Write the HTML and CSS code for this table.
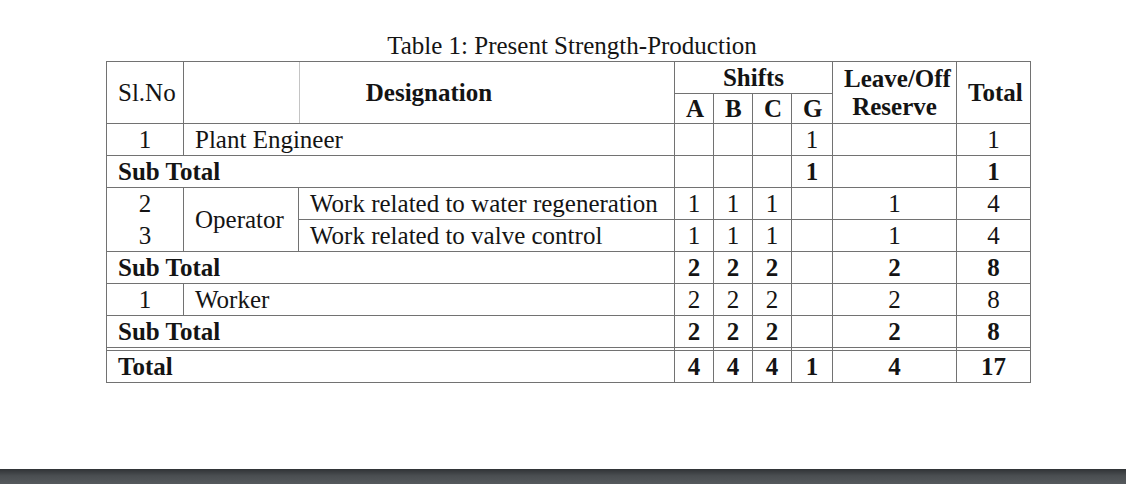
FILE: index.html
```html
<!DOCTYPE html>
<html>
<head>
<meta charset="utf-8">
<link rel="stylesheet" href="styles.css">
</head>
<body>
<div class="page">
  <div class="doc">
    <div class="wrap">
      <div class="caption">Table 1: Present Strength-Production</div>
      <table class="tbl">
        <colgroup>
          <col class="w-sl"><col class="w-d1"><col class="w-d2">
          <col class="w-s"><col class="w-s"><col class="w-s"><col class="w-g">
          <col class="w-leave"><col class="w-total">
        </colgroup>
        <thead>
          <tr class="h1">
            <th rowspan="2" class="plain">Sl.No</th>
            <th rowspan="2" colspan="2" class="desig">Designation</th>
            <th colspan="4">Shifts</th>
            <th rowspan="2" class="leave">Leave/Off<br>Reserve</th>
            <th rowspan="2">Total</th>
          </tr>
          <tr class="h2">
            <th>A</th><th>B</th><th>C</th><th>G</th>
          </tr>
        </thead>
        <tbody>
          <tr>
            <td class="c">1</td><td colspan="2" class="l">Plant Engineer</td>
            <td></td><td></td><td></td><td class="c">1</td><td></td><td class="c">1</td>
          </tr>
          <tr class="b">
            <td colspan="3" class="l">Sub Total</td>
            <td></td><td></td><td></td><td class="c">1</td><td></td><td class="c">1</td>
          </tr>
          <tr>
            <td class="c nobot">2</td><td rowspan="2" class="l">Operator</td><td class="l">Work related to water regeneration</td>
            <td class="c">1</td><td class="c">1</td><td class="c">1</td><td></td><td class="c">1</td><td class="c">4</td>
          </tr>
          <tr>
            <td class="c notop">3</td><td class="l">Work related to valve control</td>
            <td class="c">1</td><td class="c">1</td><td class="c">1</td><td></td><td class="c">1</td><td class="c">4</td>
          </tr>
          <tr class="b">
            <td colspan="3" class="l">Sub Total</td>
            <td class="c">2</td><td class="c">2</td><td class="c">2</td><td></td><td class="c">2</td><td class="c">8</td>
          </tr>
          <tr>
            <td class="c">1</td><td colspan="2" class="l">Worker</td>
            <td class="c">2</td><td class="c">2</td><td class="c">2</td><td></td><td class="c">2</td><td class="c">8</td>
          </tr>
          <tr class="b">
            <td colspan="3" class="l">Sub Total</td>
            <td class="c">2</td><td class="c">2</td><td class="c">2</td><td></td><td class="c">2</td><td class="c">8</td>
          </tr>
          <tr class="gap">
            <td colspan="3"></td><td></td><td></td><td></td><td></td><td></td><td></td>
          </tr>
          <tr class="b">
            <td colspan="3" class="l">Total</td>
            <td class="c">4</td><td class="c">4</td><td class="c">4</td><td class="c">1</td><td class="c">4</td><td class="c">17</td>
          </tr>
        </tbody>
      </table>
    </div>
  </div>
  <div class="bar"></div>
</div>
</body>
</html>
```
FILE: styles.css
```css
html, body {
  margin: 0;
  padding: 0;
  background: #ffffff;
}
.page {
  height: 484px;
  display: flex;
  flex-direction: column;
}
.doc {
  flex: 1;
  padding-left: 106px;
  padding-top: 31px;
}
.wrap {
  width: 925px;
  font-family: "Liberation Serif", "Times New Roman", serif;
  font-size: 25px;
  color: #141414;
}
.caption {
  text-align: center;
  height: 30px;
  line-height: 30px;
  padding-left: 7px;
}
.tbl {
  border-collapse: collapse;
  table-layout: fixed;
  width: 925px;
}
.w-sl { width: 77px; }
.w-d1 { width: 115px; }
.w-d2 { width: 376px; }
.w-s { width: 39px; }
.w-g { width: 41px; }
.w-leave { width: 124px; }
.w-total { width: 74px; }
.tbl th, .tbl td {
  border: 1px solid #727272;
  padding: 0 11px;
  line-height: 25px;
  white-space: nowrap;
  vertical-align: middle;
}
.tbl th {
  font-weight: bold;
  text-align: center;
}
.tbl th.plain {
  font-weight: normal;
}
.tbl th.desig {
  background: linear-gradient(#c4c4c4, #c4c4c4) no-repeat 115px 0 / 1px 100%;
}
.tbl th.leave {
  line-height: 28px;
}
.tr, .h1 th { }
.h1 { height: 32px; }
.h2 { height: 30px; }
.tbl td { height: 31px; }
.tbl td.c { text-align: center; padding: 0; }
.tbl td.l { text-align: left; }
.tbl tr.b td { font-weight: bold; }
.tbl td.nobot { border-bottom-color: transparent; }
.tbl td.notop { border-top-color: transparent; }
.tbl tr.gap td {
  height: 2px;
  padding: 0;
  line-height: 0;
  font-size: 0;
}
.bar {
  height: 15px;
  background: linear-gradient(#303336, #4a4e51 45%, #565a5d);
}
```
